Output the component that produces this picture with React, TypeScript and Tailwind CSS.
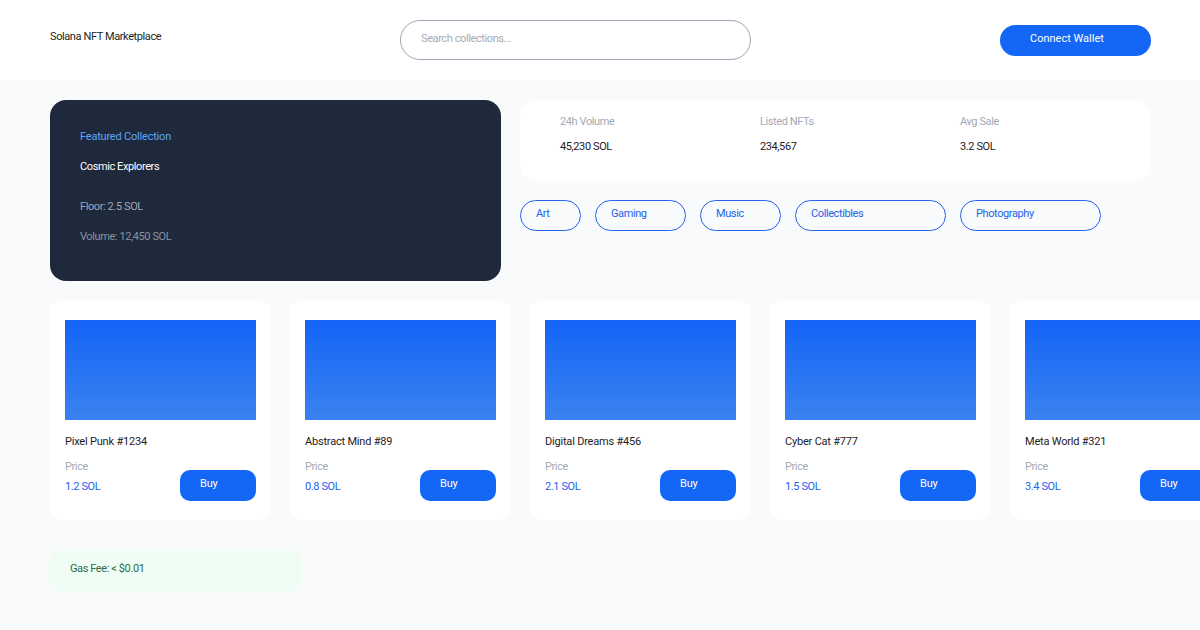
import React from 'react';

const stats = [
  { label: '24h Volume', value: '45,230 SOL' },
  { label: 'Listed NFTs', value: '234,567' },
  { label: 'Avg Sale', value: '3.2 SOL' },
];

const chips = [
  { name: 'Art', w: 'w-[61px]' },
  { name: 'Gaming', w: 'w-[91px]' },
  { name: 'Music', w: 'w-[81px]' },
  { name: 'Collectibles', w: 'w-[151px]' },
  { name: 'Photography', w: 'w-[141px]' },
];

const nfts = [
  { name: 'Pixel Punk #1234', price: '1.2 SOL' },
  { name: 'Abstract Mind #89', price: '0.8 SOL' },
  { name: 'Digital Dreams #456', price: '2.1 SOL' },
  { name: 'Cyber Cat #777', price: '1.5 SOL' },
  { name: 'Meta World #321', price: '3.4 SOL' },
];

function NftCard({ name, price }: { name: string; price: string }) {
  return (
    <div className="flex w-[221px] shrink-0 flex-col rounded-xl bg-white px-[15px] pt-5 pb-[19px]">
      <div className="h-[100px] w-full bg-gradient-to-b from-[#1263f6] to-[#3b82f0]" />
      <p className="mt-[15px] text-[11px] leading-[14px] tracking-[-0.2px] text-[#1f2125]">{name}</p>
      <div className="mt-[11px] flex items-start justify-between">
        <div>
          <p className="text-[11px] leading-[14px] text-[#a3a8b3]">Price</p>
          <p className="mt-[6px] text-[11px] leading-[14px] text-[#2563eb]">{price}</p>
        </div>
        <button className="mt-[10px] h-[31px] w-[76px] rounded-[10px] bg-[#1366f6] pb-[2px] pl-5 text-left text-[11px] tracking-[-0.2px] text-white">
          Buy
        </button>
      </div>
    </div>
  );
}

export default function App() {
  return (
    <div className="min-h-[630px] overflow-hidden bg-[#f8fafc] font-['Roboto',sans-serif] tracking-[-0.4px]">
      <header className="flex h-20 items-center bg-white pl-[50px] pr-[49px]">
        <p className="w-[350px] -mt-[5px] text-[11px] text-[#1d1f23]">Solana NFT Marketplace</p>
        <input
          placeholder="Search collections..."
          className="-mt-[1px] h-10 w-[351px] rounded-full border border-[#a3a3b5] bg-white px-5 pb-[3px] text-[11px] tracking-[-0.4px] text-gray-700 outline-none placeholder:text-[#a6abb8]"
        />
        <button className="ml-auto h-[31px] w-[151px] rounded-full bg-[#1366f6] pb-[1px] pl-[30px] text-left text-[11px] tracking-normal text-white">
          Connect Wallet
        </button>
      </header>

      <main className="px-[50px] pt-5">
        <div className="flex gap-[19px]">
          <section className="h-[181px] w-[451px] shrink-0 rounded-2xl bg-[#1e293b] px-[30px] pt-[30px]">
            <p className="text-[11px] leading-[14px] tracking-[-0.2px] text-[#60a5fa]">Featured Collection</p>
            <p className="mt-4 text-[11px] leading-[14px] text-white">Cosmic Explorers</p>
            <p className="mt-[26px] text-[11px] leading-[14px] text-[#a0a8b6]">Floor: 2.5 SOL</p>
            <p className="mt-4 text-[11px] leading-[14px] text-[#8a93a3]">Volume: 12,450 SOL</p>
          </section>

          <div className="flex w-[631px] shrink-0 flex-col gap-[19px]">
            <div className="flex h-[81px] rounded-2xl bg-white pl-10 pt-[15px]">
              {stats.map((s) => (
                <div key={s.label} className="w-[200px] shrink-0">
                  <p className="text-[11px] leading-[14px] text-[#a3a8b3]">{s.label}</p>
                  <p className="mt-[11px] text-[11px] leading-[14px] text-[#1f2125]">{s.value}</p>
                </div>
              ))}
            </div>
            <div className="flex gap-[14px]">
              {chips.map((c) => (
                <span
                  key={c.name}
                  className={`${c.w} h-[31px] rounded-full border border-[#2563eb] pl-[15px] pt-[6px] text-[11px] leading-[14px] text-[#2563eb]`}
                >
                  {c.name}
                </span>
              ))}
            </div>
          </div>
        </div>

        <div className="mt-[19px] flex gap-[19px]">
          {nfts.map((n) => (
            <NftCard key={n.name} {...n} />
          ))}
        </div>

        <div className="mt-[30px] h-[41px] w-[251px] rounded-lg bg-[#f0fdf4] pl-5 pt-[12px] text-[11px] leading-[14px] text-[#2f6b47]">
          Gas Fee: &lt; $0.01
        </div>
      </main>
    </div>
  );
}
